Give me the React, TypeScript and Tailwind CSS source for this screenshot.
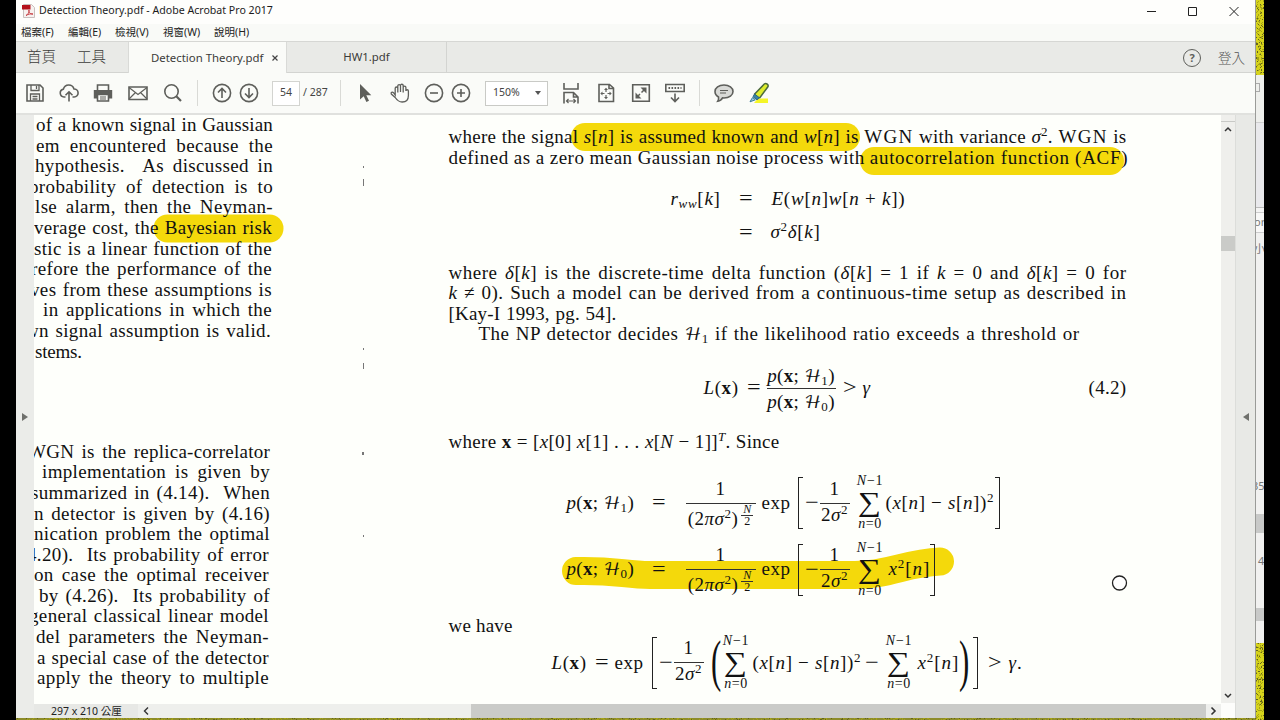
import type { ReactNode } from "react";

const serif = "font-['Liberation_Serif','DejaVu_Math_TeX_Gyre','DejaVu_Serif',serif]";
const ui = "font-['Noto_Sans','Noto_Sans_CJK_TC',sans-serif]";

/* ---------- toolbar ---------- */

function Icon({ className = "", children }: { className?: string; children: ReactNode }) {
    return (
        <svg
            viewBox="0 0 20 20"
            className={`w-5 h-5 shrink-0 overflow-visible ${className}`}
            fill="none"
            stroke="#5e5f5b"
            strokeWidth="1.6"
        >
            {children}
        </svg>
    );
}

function Divider({ className = "" }: { className?: string }) {
    return <div className={`w-px h-[26px] shrink-0 bg-[#d9dad6] ${className}`} />;
}

function Toolbar() {
    return (
        <div className="h-[42px] shrink-0 flex items-center bg-[#fafbf8] border-b-2 border-[#e0e1de]">
            <Icon className="ml-[9px]">
                <path d="M2 2h13l3 3v13H2z" />
                <path d="M6 2v5.5h8V2M11.5 3v3M5.5 18v-7h9v7M7.5 13.5h5M7.5 16h5" strokeWidth="1.3" />
            </Icon>
            <Icon className="ml-[14px]">
                <path d="M6.5 14H5a4 4 0 0 1-.6-7.9A5.5 5.5 0 0 1 15 6a4 4 0 0 1 .2 8h-1.7" />
                <path d="M10 18.5V9M6.5 12.2 10 8.8l3.5 3.4" />
            </Icon>
            <Icon className="ml-[14px]">
                <path d="M4.5 7V2h11v5" />
                <path d="M.8 7h18.4v8.5h-3.2v-4H4v4H.8z" fill="#5e5f5b" stroke="none" />
                <path d="M4.5 11.5h11V18h-11z" fill="#fafbf8" />
                <path d="M7 14h6M7 16h6" strokeWidth="1" />
            </Icon>
            <Icon className="ml-[15px]">
                <path d="M1 4h18v12.5H1z" />
                <path d="m1 4.5 9 7 9-7M1 16l6.5-6.5M19 16l-6.5-6.5" strokeWidth="1.2" />
            </Icon>
            <Icon className="ml-[15px]">
                <circle cx="8.5" cy="8.5" r="6.7" />
                <path d="m13.3 13.3 4.7 4.7" strokeWidth="2.2" />
            </Icon>
            <Divider className="ml-[14px]" />
            <Icon className="ml-[14px]">
                <circle cx="10" cy="10" r="8.6" />
                <path d="M10 15V6M6 9.5l4-4 4 4" />
            </Icon>
            <Icon className="ml-[7px]">
                <circle cx="10" cy="10" r="8.6" />
                <path d="M10 5v9M6 10.5l4 4 4-4" />
            </Icon>
            <div className="ml-[13px] w-[28px] h-[25px] shrink-0 border border-[#d3d4d0] bg-white flex items-center justify-center text-[10.5px] text-[#444]">
                54
            </div>
            <div className="ml-[3px] w-[26px] shrink-0 whitespace-nowrap text-[10.5px] text-[#444]">/ 287</div>
            <Divider className="ml-[11px]" />
            <Icon className="ml-[14px]">
                <path d="M5 1v15.5l3.7-3.3 2.7 5.8 2.6-1.2-2.7-5.6h5z" fill="#5e5f5b" stroke="none" />
            </Icon>
            <Icon className="ml-[15px]">
                <path
                    d="M5.2 12V5.3a1.3 1.3 0 0 1 2.6 0V9.5 3a1.3 1.3 0 0 1 2.7 0v6V2.6a1.3 1.3 0 0 1 2.7 0v6.9V4.5a1.3 1.3 0 0 1 2.7 0V8a1.2 1.2 0 0 1 2.5 0v4.5c0 4-2.5 6.5-6.2 6.5-3.5 0-5-1.5-7-4.5L1.3 11c-.8-1.5 1-2.5 2.2-1.3z"
                    strokeWidth="1.3"
                />
            </Icon>
            <Icon className="ml-[14px]">
                <circle cx="10" cy="10" r="8.6" />
                <path d="M6 10h8" />
            </Icon>
            <Icon className="ml-[7px]">
                <circle cx="10" cy="10" r="8.6" />
                <path d="M6 10h8M10 6v8" />
            </Icon>
            <div className="ml-[14px] w-[63px] h-[25px] shrink-0 border border-[#c9cac6] bg-white flex items-center justify-between pl-[7px] pr-[6px] text-[10.5px] text-[#444]">
                150%
                <span className="border-x-[3px] border-t-[4px] border-x-transparent border-t-[#555]" />
            </div>
            <Icon className="ml-[13px]">
                <path d="M3 0v6h14V0M3 20.5V9.5h9.5L17 14v6.5M12.5 9.5V14H17" />
                <path d="M5.5 18h9M7.5 16l-2 2 2 2M12.5 16l2 2-2 2" strokeWidth="1.2" />
            </Icon>
            <Icon className="ml-[15px]">
                <path d="M3 1.5h10.5L17.5 5v13.5H3zM13 1.5v4h4.5" />
                <path d="M10 6v3M10 12v3M5.5 10.5h3M11.5 10.5h3" strokeWidth="1.2" />
                <path d="m10 4.8 2 2.2H8zM10 16.2l2-2.2H8zM4.3 10.5l2.2-2v4zM15.7 10.5l-2.2-2v4z" fill="#5e5f5b" stroke="none" />
            </Icon>
            <Icon className="ml-[15px]">
                <path d="M1.7 1.7h16.6v16.6H1.7z" />
                <path d="M9.5 4.5h6v6zM4.5 9.5v6h6z" fill="#5e5f5b" stroke="none" />
                <path d="m10.5 9.5 3-3M6.5 13.5 9 11" strokeWidth="1.5" />
            </Icon>
            <Icon className="ml-[14px]">
                <path d="M.8 1.5h18.4v7H.8z" />
                <path d="M3.5 5h13" strokeWidth="1.8" strokeDasharray="1.6 1.4" />
                <path d="M10 10.5V18M6 14.5l4 4 4-4" />
            </Icon>
            <Divider className="ml-[14px]" />
            <Icon className="ml-[14px]">
                <path d="M10 2c5.2 0 9 2.7 9 6.5S15.2 15 10 15l-1.5-.1C7.5 17 5.5 18 3.8 18.2c.8-1.2 1-2.5.7-4.2C2.3 12.8 1 10.8 1 8.5 1 4.7 4.8 2 10 2z" fill="#d9dad7" />
                <path d="M6 7.5h8M6 10h6" strokeWidth="1.2" />
            </Icon>
            <Icon className="ml-[15px]">
                <path d="M9 15.5h10V20H5z" fill="#f4f528" stroke="none" />
                <path d="M15.5.8c1.8-1 4.4 1 3.4 3L11 14.5l-4.5.3-.8-3.8z" fill="#dcec2c" stroke="#4b6a3c" strokeWidth="1.5" />
                <path d="m5.5 11 5 3.8-2.5 2-4-3z" fill="#3784a6" stroke="#2f6480" strokeWidth="1" />
                <path d="m3.5 14.5 2.8 2.3L1 18.8z" fill="#9ccbe0" stroke="#3a7c9c" strokeWidth="1" />
            </Icon>
        </div>
    );
}

function TitleBar() {
    return (
        <div className="h-6 shrink-0 flex items-center bg-[#fefefc]">
            <svg viewBox="0 0 13 14" className="ml-1.5 -mt-0.5 w-[13px] h-[14px] shrink-0">
                <path d="M1.5.5h8l3 3v10h-11z" fill="#f7f1ef" stroke="#c9bfbd" />
                <path d="M0 1h8.5v4.5H0z" fill="#b5121b" />
                <path d="M4 11.5c2-1 3.5-3.5 3-5.5-.8 2 1.5 4.5 4 4-2.5-.5-5 .3-7 1.5z" fill="none" stroke="#c3343a" strokeWidth=".9" />
            </svg>
            <span className="ml-1 -mt-0.5 text-[10.6px] text-[#1c1c1c] whitespace-nowrap">
                Detection Theory.pdf - Adobe Acrobat Pro 2017
            </span>
            <svg viewBox="0 0 90 12" className="ml-auto mr-[16px] -mt-[3px] w-[90px] h-3 overflow-visible" fill="none" stroke="#222" strokeWidth="1">
                <path d="M-2 6.5h9M39.500 2.500h8v8h-8zM80.500 2l9 9M89.500 2l-9 9" />
            </svg>
        </div>
    );
}

function MenuBar() {
    return (
        <div className="h-[17px] shrink-0 flex items-center bg-[#f9faf7] pl-[5px] text-[10.5px] text-[#222] whitespace-nowrap">
            <span className="w-[47px]">檔案(F)</span>
            <span className="w-[47px]">編輯(E)</span>
            <span className="w-[48px]">檢視(V)</span>
            <span className="w-[51px]">視窗(W)</span>
            <span>說明(H)</span>
        </div>
    );
}

function TabBar() {
    return (
        <div className="h-8 shrink-0 flex bg-[#e9eae7] border-t border-[#d6d7d4] text-[#3c3c3a] whitespace-nowrap">
            <div className="w-[112px] shrink-0 flex pl-[11px] pt-[4px] text-[14.5px] font-light border-b border-[#d3d4d1]">
                <span className="w-[50px]">首頁</span>
                <span>工具</span>
            </div>
            <div className="w-[159px] shrink-0 flex items-center bg-[#fafbf8] border-x border-[#d9dad7] pl-[22px] text-[11.4px]">
                <span className="w-[121px]">Detection Theory.pdf</span>
                <svg viewBox="0 0 6 6" className="w-1.5 h-1.5" stroke="#444" strokeWidth="1.2">
                    <path d="m.5.5 5 5M5.5.5l-5 5" />
                </svg>
            </div>
            <div className="w-[160px] shrink-0 flex items-center justify-center border-b border-r border-[#d3d4d1] text-[11.4px]">HW1.pdf</div>
            <div className="flex-1 flex items-center justify-end border-b border-[#d3d4d1]">
                <div className="mt-0.5 w-[18px] h-[18px] rounded-full border-[1.5px] border-[#5e5f5b] flex items-center justify-center text-[11px] font-bold text-[#5e5f5b]">
                    ?
                </div>
                <span className="ml-[17px] mr-[10px] mt-0.5 text-[13.5px] font-light text-[#555]">登入</span>
            </div>
        </div>
    );
}

/* ---------- document text ---------- */

function Line({ className = "", children }: { className?: string; children: ReactNode }) {
    return (
        <div className={`h-[20.6px] leading-[20.6px] whitespace-nowrap [text-align-last:justify] ${className}`}>{children}</div>
    );
}

function LeftPage() {
    return (
        <div className="w-[239px] shrink-0 h-full overflow-hidden flex flex-col items-end text-[19px] tracking-[0.35px]">
            <Line className="w-[237px] shrink-0 tracking-[0.15px]">of a known signal in Gaussian</Line>
            <Line className="w-[237px] shrink-0">em encountered because the</Line>
            <Line className="w-[238px] shrink-0">hypothesis. &nbsp;As discussed in</Line>
            <Line className="w-[244px] shrink-0">probability of detection is to</Line>
            <Line className="w-[238px] shrink-0">lse alarm, then the Neyman-</Line>
            <Line className="w-[238px] shrink-0 mr-px tracking-[0.25px]">verage cost, the Bayesian risk</Line>
            <Line className="w-[238px] shrink-0 mr-px">stic is a linear function of the</Line>
            <Line className="w-[241px] shrink-0 mr-px">refore the performance of the</Line>
            <Line className="w-[242px] shrink-0 mr-px">ves from these assumptions is</Line>
            <Line className="w-[229px] shrink-0 mr-px">in applications in which the</Line>
            <Line className="w-[246px] shrink-0 mr-0.5">wn signal assumption is valid.</Line>
            <Line className="w-[45px] shrink-0 mr-[193px] tracking-[-0.2px]">stems.</Line>
            <div className="h-[79.6px] shrink-0" />
            <Line className="w-[242px] shrink-0 mr-[3px] tracking-[0.25px]">WGN is the replica-correlator</Line>
            <Line className="w-[228px] shrink-0 mr-[3px]">implementation is given by</Line>
            <Line className="w-[239px] shrink-0 mr-[3px]">summarized in (4.14). &nbsp;When</Line>
            <Line className="w-[236px] shrink-0 mr-[3px]">n detector is given by (4.16)</Line>
            <Line className="w-[236px] shrink-0 mr-[3px]">nication problem the optimal</Line>
            <Line className="w-[242px] shrink-0 mr-1">4.20). &nbsp;Its probability of error</Line>
            <Line className="w-[235px] shrink-0 mr-1">on case the optimal receiver</Line>
            <Line className="w-[231px] shrink-0 mr-[3px]">by (4.26). &nbsp;Its probability of</Line>
            <Line className="w-[240px] shrink-0 mr-1">general classical linear model</Line>
            <Line className="w-[233px] shrink-0 mr-1">del parameters the Neyman-</Line>
            <Line className="w-[232px] shrink-0 mr-1">a special case of the detector</Line>
            <Line className="w-[232px] shrink-0 mr-1">apply the theory to multiple</Line>
        </div>
    );
}

/* ---------- math ---------- */

const V = ({ children }: { children: ReactNode }) => <i>{children}</i>;

const Sub = ({ children }: { children: ReactNode }) => <span className="relative top-[3px] text-[13px]">{children}</span>;

const Sup = ({ children }: { children: ReactNode }) => <span className="relative -top-[7px] text-[13px]">{children}</span>;

const Script = () => <span className="text-[17px] font-['DejaVu_Math_TeX_Gyre','DejaVu_Serif',serif]">ℋ</span>;

function Slot({ className = "", children }: { className?: string; children?: ReactNode }) {
    return <div className={`shrink-0 whitespace-nowrap ${className}`}>{children}</div>;
}

/* relation sign, stretched to the width of a display equation's sign */
function Rel({ className = "", children }: { className?: string; children: ReactNode }) {
    return (
        <Slot className={className}>
            <span className="inline-block text-[21px] tracking-normal scale-x-115 origin-left">{children}</span>
        </Slot>
    );
}

function Likelihood({ n }: { n: number }) {
    return (
        <span className="tracking-[0.3px]">
            <V>p</V>(<b>x</b>; <Script />
            <Sub>{n}</Sub>)
        </span>
    );
}

function Fraction({ className = "", top, bottom }: { className?: string; top: ReactNode; bottom: ReactNode }) {
    return (
        <div className={`shrink-0 flex flex-col items-center whitespace-nowrap ${className}`}>
            <div className="h-[30px] leading-[32px]">{top}</div>
            <div className="h-px w-full bg-[#333]" />
            <div className="h-[30px] leading-[21px]">{bottom}</div>
        </div>
    );
}

function Sum({ className = "" }: { className?: string }) {
    return (
        <div className={`shrink-0 w-[31px] flex flex-col items-center whitespace-nowrap pb-[2px] ${className}`}>
            <div className="h-[15px] leading-[15px] text-[14px] tracking-[0.7px]">
                <V>N</V>−1
            </div>
            <div className="h-7 leading-[28px] text-[27px] tracking-normal scale-x-120">∑</div>
            <div className="h-[15px] leading-[15px] text-[14px] tracking-[0.6px]">
                <V>n</V>=0
            </div>
        </div>
    );
}

function Bracket({ side, className = "" }: { side: "left" | "right"; className?: string }) {
    return (
        <div
            className={`w-[5px] h-[52px] shrink-0 border-y border-[#222] ${side === "left" ? "border-l-[1.5px]" : "border-r-[1.5px]"} ${className}`}
        />
    );
}

function HalfVariance({ className = "" }: { className?: string }) {
    return (
        <Fraction
            className={`w-[30px] ${className}`}
            top="1"
            bottom={
                <>
                    2<V>σ</V>
                    <Sup>2</Sup>
                </>
            }
        />
    );
}

function Normaliser() {
    return (
        <Fraction
            className="w-[70px] mr-[6px]"
            top="1"
            bottom={
                <div className="flex items-start leading-[29px]">
                    <span className="tracking-[0.5px]">
                        (2<V>πσ</V>
                        <Sup>2</Sup>)
                    </span>
                    <span className="ml-[3px] w-[12px] mt-px flex flex-col items-center text-[12px] leading-[9px] tracking-normal">
                        <V>N</V>
                        <span className="mt-px w-full border-t border-[#333] text-center leading-[10px]">2</span>
                    </span>
                </div>
            }
        />
    );
}

function SquaredError() {
    return (
        <span className="tracking-[0.65px]">
            (<V>x</V>[<V>n</V>] − <V>s</V>[<V>n</V>])<Sup>2</Sup>
        </span>
    );
}

function Energy() {
    return (
        <span className="tracking-[0.9px]">
            <V>x</V>
            <Sup>2</Sup>[<V>n</V>]
        </span>
    );
}

function RightPage() {
    return (
        <div className="w-[678px] shrink-0 pt-[12px] text-[19px] tracking-[0.5px]">
            <Line className="tracking-[0.25px]">
                where the signal <V>s</V>[<V>n</V>] is assumed known and <V>w</V>[<V>n</V>] is <span className="tracking-[1.3px]">WGN</span> with variance <V>σ</V>
                <Sup>2</Sup>. <span className="tracking-[1.3px]">WGN</span> is
            </Line>
            <Line className="tracking-[0.45px]">
                defined as a zero mean Gaussian noise process with <span className="tracking-[0.7px]">autocorrelation function (ACF)</span>
            </Line>

            <div className="mt-[14.4px] h-[33.3px] flex items-center pl-[222px]">
                <Slot className="w-[68px] tracking-[0.7px]">
                    <V>r</V>
                    <Sub>
                        <V>ww</V>
                    </Sub>
                    [<V>k</V>]
                </Slot>
                <Rel className="w-[33px]">=</Rel>
                <Slot className="tracking-[0.75px]">
                    <V>E</V>(<V>w</V>[<V>n</V>]<V>w</V>[<V>n</V> + <V>k</V>])
                </Slot>
            </div>
            <div className="h-[33.3px] flex items-center pl-[290px]">
                <Rel className="w-[32px]">=</Rel>
                <Slot className="tracking-[0.7px]">
                    <V>σ</V>
                    <Sup>2</Sup>
                    <V>δ</V>[<V>k</V>]
                </Slot>
            </div>

            <Line className="mt-[13.4px]">
                where <V>δ</V>[<V>k</V>] is the discrete-time delta function (<V>δ</V>[<V>k</V>] = 1 if <V>k</V> = 0 and <V>δ</V>[<V>k</V>] = 0 for
            </Line>
            <Line>
                <V>k</V> ≠ 0). Such a model can be derived from a continuous-time setup as described in
            </Line>
            <Line className="w-[168px] tracking-[0.2px]">[Kay-I 1993, pg. 54].</Line>
            <Line className="ml-[30px] w-[601px]">
                The NP detector decides <Script />
                <Sub>1</Sub> if the likelihood ratio exceeds a threshold or
            </Line>

            <div className="h-[86.6px] flex items-center pl-[255px]">
                <Slot className="w-[43px] tracking-[0.6px]">
                    <V>L</V>(<b>x</b>)
                </Slot>
                <Rel className="w-[20px]">=</Rel>
                <div className="shrink-0 w-[69px] mr-[7px] flex flex-col items-center">
                    <div className="h-[25px] leading-[25px]">
                        <Likelihood n={1} />
                    </div>
                    <div className="h-px w-full bg-[#333]" />
                    <div className="h-[25px] leading-[25px]">
                        <Likelihood n={0} />
                    </div>
                </div>
                <Rel className="w-[20px]">&gt;</Rel>
                <Slot>
                    <V>γ</V>
                </Slot>
                <Slot className="ml-auto tracking-[0.3px]">(4.2)</Slot>
            </div>

            <Line className="w-[331px] tracking-[0.3px]">
                where <b>x</b> = [<V>x</V>[0] <V>x</V>[1] . . . <V>x</V>[<V>N</V> − 1]]
                <Sup>
                    <V>T</V>
                </Sup>
                . Since
            </Line>

            <div className="mt-[17.7px] h-[66.6px] flex items-center pl-[118px]">
                <Slot className="w-[85px]">
                    <Likelihood n={1} />
                </Slot>
                <Rel className="w-[34px]">=</Rel>
                <Normaliser />
                <Slot className="w-[36px] tracking-[0.5px]">exp</Slot>
                <Bracket side="left" className="mr-[2px]" />
                <Rel className="w-[15px]">−</Rel>
                <HalfVariance className="mr-[5px]" />
                <Sum />
                <Slot className="w-[109px]">
                    <SquaredError />
                </Slot>
                <Bracket side="right" />
            </div>
            <div className="h-[66.6px] flex items-center pl-[118px]">
                <Slot className="w-[85px]">
                    <Likelihood n={0} />
                </Slot>
                <Rel className="w-[34px]">=</Rel>
                <Normaliser />
                <Slot className="w-[36px] tracking-[0.5px]">exp</Slot>
                <Bracket side="left" className="mr-[2px]" />
                <Rel className="w-[15px]">−</Rel>
                <HalfVariance className="mr-[5px]" />
                <Sum className="mr-[3px]" />
                <Slot className="w-[41px]">
                    <Energy />
                </Slot>
                <Bracket side="right" />
            </div>

            <Line className="mt-[13.4px] w-[64px] tracking-[0.2px]">we have</Line>

            <div className="h-[52px] flex items-center pl-[103px]">
                <Slot className="w-[43px] tracking-[0.6px]">
                    <V>L</V>(<b>x</b>)
                </Slot>
                <Rel className="w-[20px]">=</Rel>
                <Slot className="w-[37px] tracking-[0.5px]">exp</Slot>
                <Bracket side="left" className="mr-[2px]" />
                <Rel className="w-[15px]">−</Rel>
                <HalfVariance className="mr-[7px]" />
                <Slot className="w-[10px] h-[52px] leading-[48px] text-[56px] scale-x-55 origin-left">(</Slot>
                <Sum className="mr-[1px]" />
                <Slot className="w-[112px]">
                    <SquaredError />
                </Slot>
                <Rel className="w-[19px]">−</Rel>
                <Sum className="mr-[3px]" />
                <Slot className="w-[41px]">
                    <Energy />
                </Slot>
                <Slot className="w-[14px] h-[52px] leading-[48px] text-[56px] scale-x-55 origin-left">)</Slot>
                <Bracket side="right" className="mr-[10px]" />
                <Rel className="w-[21px]">&gt;</Rel>
                <Slot className="tracking-[1px]">
                    <V>γ</V>.
                </Slot>
            </div>
        </div>
    );
}

/* marker strokes drawn under the text */
function Highlights() {
    return (
        <svg
            viewBox="34 115 1187 589"
            className="absolute inset-0 w-[1187px] h-[589px]"
            fill="none"
            stroke="#f4d90b"
            strokeWidth="28"
            strokeLinecap="round"
            strokeLinejoin="round"
        >
            <path d="M167.5 228.5H269.5" />
            <path d="M585 137H846" />
            <path d="M874 161H1110" />
            <path d="M576 571C615 570 625 575 650 575H855C890 575 905 563 940 561.5" />
            <g fill="#777" stroke="none">
                <path d="M363 166h1v2h-1zM363 179h1v7h-1zM363 348h1v2h-1zM363 363h1v6h-1zM362 452h2v3h-2zM363 535h1v2h-1z" />
            </g>
            <circle cx="1119.5" cy="583" r="7" stroke="#222" strokeWidth="1.3" fill="#fff" />
        </svg>
    );
}

function Document() {
    return (
        <div className={`relative flex-1 overflow-hidden bg-[#fefffb] text-[#111] ${serif}`}>
            <Highlights />
            <div className="relative flex h-full">
                <LeftPage />
                <div className="w-[175.5px] shrink-0" />
                <RightPage />
            </div>
        </div>
    );
}

function BottomBar() {
    return (
        <div className="h-[14px] shrink-0 flex bg-[#eeefec]">
            <div className="w-[104px] shrink-0 bg-[#e7e8e5] pl-[17px] leading-[14px] text-[10.5px] text-[#222] whitespace-nowrap">297 x 210 公厘</div>
            <svg viewBox="0 0 15 14" className="w-[15px] h-[14px] shrink-0" fill="none" stroke="#333" strokeWidth="1.4">
                <path d="M10 3.5 6.5 7l3.5 3.5" />
            </svg>
            <div className="w-[318px] shrink-0" />
            <div className="w-[735px] shrink-0 bg-[#cacbc8]" />
            <svg viewBox="0 0 15 14" className="w-[15px] h-[14px] shrink-0" fill="none" stroke="#333" strokeWidth="1.6">
                <path d="M5.5 3.5 9 7l-3.5 3.5" />
            </svg>
        </div>
    );
}

function VerticalScroll() {
    return (
        <div className="w-[15px] shrink-0 flex flex-col bg-[#efefec] border-r border-[#dcddda]">
            <div className="h-[7px] border-b border-[#c8c9c6]" />
            <svg viewBox="0 0 14 14" className="w-3.5 h-3.5" fill="none" stroke="#333" strokeWidth="1.5">
                <path d="m4 9 3-3 3 3" />
            </svg>
            <div className="mt-[100px] h-[15px] bg-[#cacbc8]" />
            <svg viewBox="0 0 14 14" className="mt-auto w-3.5 h-3.5" fill="none" stroke="#333" strokeWidth="1.5">
                <path d="m4 5 3 3 3-3" />
            </svg>
            <div className="h-[15px] bg-[#fdfdfb]" />
        </div>
    );
}

/* ---------- desktop behind the window ---------- */

function Speckle({ className = "", width, height }: { className?: string; width: number; height: number }) {
    const dots = [];
    let seed = 7;
    for (let i = 0; i < (width * height) / 3; i++) {
        seed = (seed * 16807) % 2147483647;
        const x = seed % width;
        seed = (seed * 16807) % 2147483647;
        dots.push(<rect key={i} x={x} y={seed % height} width="1" height="1" fill={i % 3 ? "#a7a315" : "#66651a"} />);
    }
    return (
        <svg viewBox={`0 0 ${width} ${height}`} className={`shrink-0 ${className}`}>
            {dots}
        </svg>
    );
}

function BackgroundWindow() {
    return (
        <div className="w-2 shrink-0 flex flex-col overflow-hidden text-[11px] text-[#777]">
            <Speckle className="w-2 h-[75px] bg-[#d6d31c]" width={8} height={75} />
            <div className="h-[48px] shrink-0 bg-[#eeefec] border-b border-[#cfcfcf] pt-2">
                <div className="w-[4px] h-[9px] border border-l-0 border-[#aaa]" />
            </div>
            <div className="h-[85px] shrink-0 bg-[#e9e9ec] border-b border-[#bbb]" />
            <div className="h-[5px] shrink-0 bg-[#f4f4f3] border-b border-[#ccc]" />
            <div className="h-[20px] shrink-0 bg-[#f8f8f7] border-b border-[#ccc] leading-[18px] -indent-0.5">or</div>
            <div className="h-[281px] shrink-0 bg-[#f1f1f0] flex flex-col justify-between">
                <span className="pt-2 -ml-0.5">小</span>
                <span className="pb-5 -ml-1">35</span>
            </div>
            <div className="h-[19px] shrink-0 bg-[#c8c9c8]" />
            <div className="h-[75px] shrink-0 bg-[#f1f1f0] pt-5 pl-0.5">4</div>
            <div className="h-[13px] shrink-0 bg-[#c8c9c8]" />
            <div className="h-[22px] shrink-0 bg-[#f1f1f0]" />
            <Speckle className="w-2 h-[77px] bg-[#d6d31c]" width={8} height={77} />
        </div>
    );
}

export default function App() {
    return (
        <div className={`w-[1280px] h-[720px] overflow-hidden flex bg-black px-4 ${ui}`}>
            <div className="w-[1240px] shrink-0 flex flex-col">
                <div className="flex-1 min-h-0 flex flex-col border-r border-[#9a9b98]">
                    <TitleBar />
                    <MenuBar />
                    <TabBar />
                    <Toolbar />
                    <div className="flex-1 min-h-0 flex">
                        <div className="w-[18px] shrink-0 bg-[#ebece9] flex items-center justify-center">
                            <div className="border-y-[4px] border-l-[6px] border-y-transparent border-l-[#6f706c]" />
                        </div>
                        <div className="w-[1187px] shrink-0 flex flex-col">
                            <Document />
                            <BottomBar />
                        </div>
                        <VerticalScroll />
                        <div className="flex-1 bg-[#e8e9e6] flex items-center justify-center">
                            <div className="border-y-[4px] border-r-[6px] border-y-transparent border-r-[#6f706c]" />
                        </div>
                    </div>
                </div>
                <Speckle className="w-[1240px] h-[2px] bg-[#8d8c2a]" width={1240} height={2} />
            </div>
            <BackgroundWindow />
        </div>
    );
}
